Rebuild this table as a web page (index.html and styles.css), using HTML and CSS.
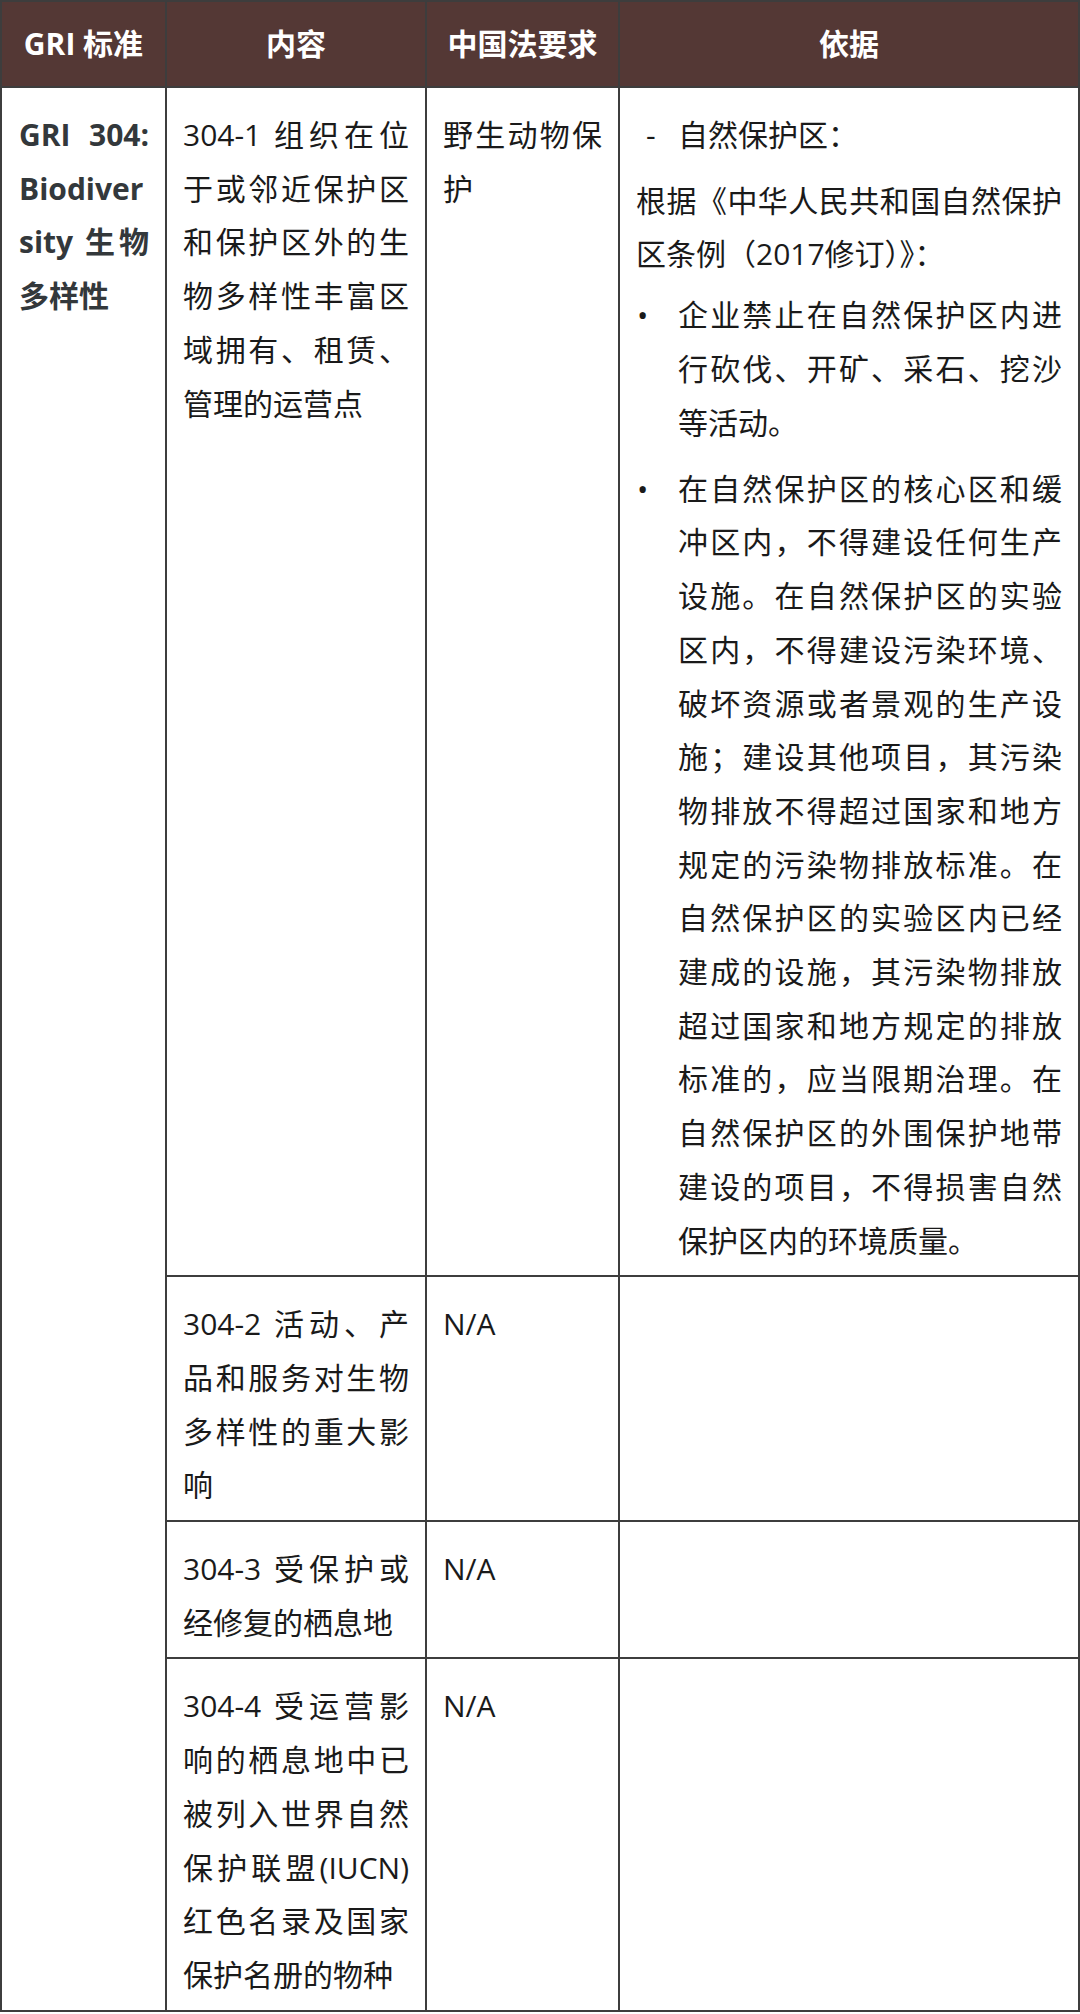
FILE: index.html
```html
<!DOCTYPE html>
<html lang="zh-CN">
<head>
<meta charset="utf-8">
<title>GRI 304 生物多样性</title>
<link rel="stylesheet" href="styles.css">
</head>
<body>
<table class="gri">
  <colgroup>
    <col class="c1"><col class="c2"><col class="c3"><col class="c4">
  </colgroup>
  <thead>
    <tr>
      <th>GRI 标准</th>
      <th>内容</th>
      <th>中国法要求</th>
      <th>依据</th>
    </tr>
  </thead>
  <tbody>
    <tr>
      <td rowspan="4" class="std">GRI 304: Biodiversity 生物多样性</td>
      <td>304-1 组织在位于或邻近保护区和保护区外的生物多样性丰富区域拥有、租赁、管理的运营点</td>
      <td>野生动物保护</td>
      <td class="basis">
        <ul class="list dash">
          <li>自然保护区：</li>
        </ul>
        <p class="law">根据《中华人民共和国自然保护区条例（2017修订）》：</p>
        <ul class="list bullet">
          <li>企业禁止在自然保护区内进行砍伐、开矿、采石、挖沙等活动。</li>
          <li>在自然保护区的核心区和缓冲区内，不得建设任何生产设施。在自然保护区的实验区内，不得建设污染环境、破坏资源或者景观的生产设施；建设其他项目，其污染物排放不得超过国家和地方规定的污染物排放标准。在自然保护区的实验区内已经建成的设施，其污染物排放超过国家和地方规定的排放标准的，应当限期治理。在自然保护区的外围保护地带建设的项目，不得损害自然保护区内的环境质量。</li>
        </ul>
      </td>
    </tr>
    <tr>
      <td>304-2 活动、产品和服务对生物多样性的重大影响</td>
      <td>N/A</td>
      <td></td>
    </tr>
    <tr>
      <td>304-3 受保护或经修复的栖息地</td>
      <td>N/A</td>
      <td></td>
    </tr>
    <tr>
      <td>304-4 受运营影响的栖息地中已被列入世界自然保护联盟(IUCN)红色名录及国家保护名册的物种</td>
      <td>N/A</td>
      <td></td>
    </tr>
  </tbody>
</table>
</body>
</html>
```

FILE: styles.css
```css
*,
*::before,
*::after {
  box-sizing: border-box;
}

html,
body {
  margin: 0;
  padding: 0;
  background: #ffffff;
}

body {
  font-family: "Open Sans", "Noto Sans CJK SC", sans-serif;
  font-size: 30px;
  line-height: 53.7px;
  color: #1a1a1a;
}

.gri {
  border-collapse: collapse;
  table-layout: fixed;
  width: 1078px;
}

.c1 { width: 165px; }
.c2 { width: 260px; }
.c3 { width: 193px; }
.c4 { width: 460px; }

.gri th,
.gri td {
  border: 2px solid #3d3d3d;
}

.gri th {
  background: #543835;
  color: #ffffff;
  font-weight: 700;
  height: 86px;
  padding: 0 8px;
  text-align: center;
  vertical-align: middle;
}

.gri td {
  vertical-align: top;
  padding: 20px 16px 8px;
  text-align: justify;
}

.gri td.std {
  font-weight: 700;
  color: #33383b;
  overflow-wrap: anywhere;
  padding-left: 17px;
}

.basis p,
.basis ul {
  margin: 0;
  padding: 0;
}

.list {
  list-style: none;
}

.list li {
  display: flex;
}

.list li::before {
  flex: 0 0 42px;
  text-align: left;
}

.dash li::before {
  content: "-";
  padding-left: 10px;
}

.bullet li::before {
  content: "\2022";
  padding-left: 1px;
}

.basis .dash {
  margin-bottom: 12px;
}

.basis .law {
  margin-bottom: 7px;
}

.bullet li + li {
  margin-top: 12.5px;
}
```
